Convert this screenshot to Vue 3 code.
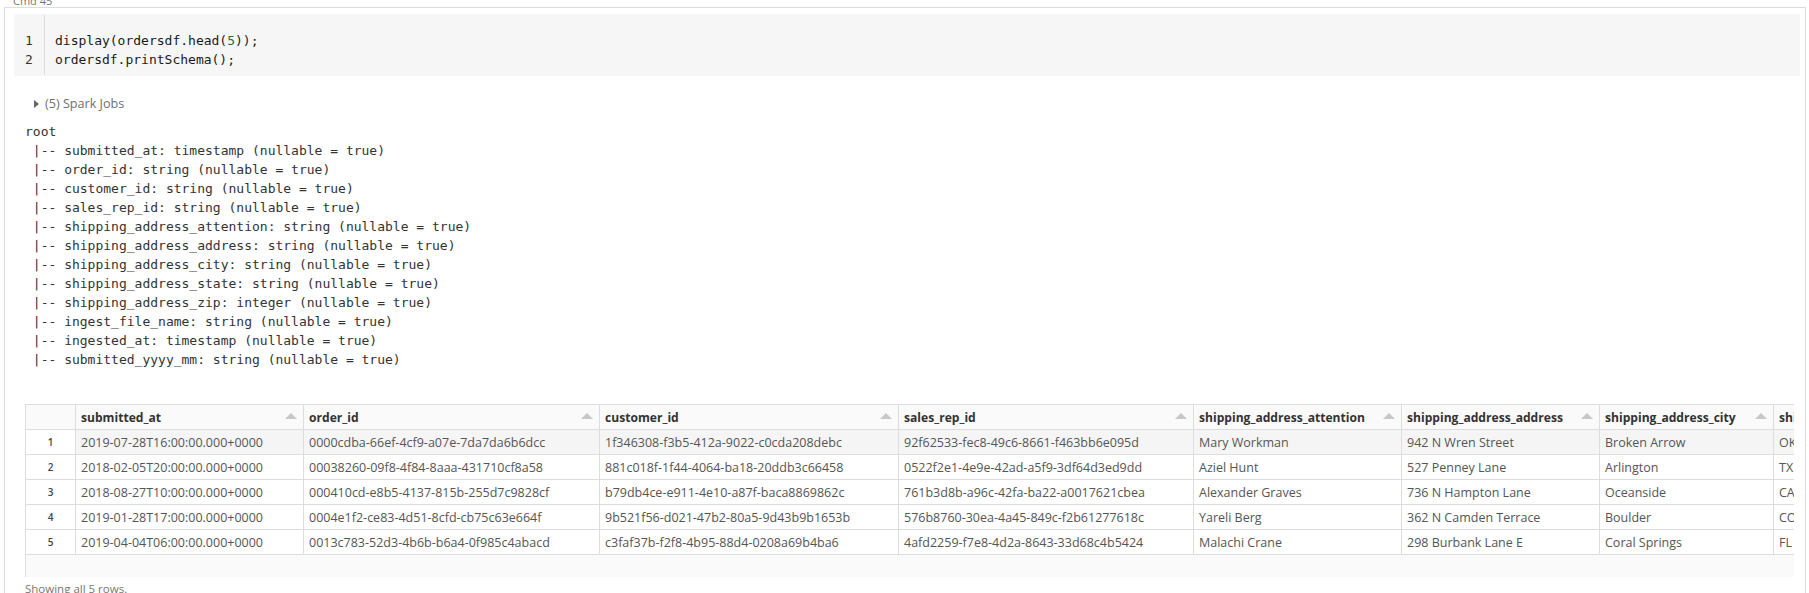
<script setup>
const schema = `root
 |-- submitted_at: timestamp (nullable = true)
 |-- order_id: string (nullable = true)
 |-- customer_id: string (nullable = true)
 |-- sales_rep_id: string (nullable = true)
 |-- shipping_address_attention: string (nullable = true)
 |-- shipping_address_address: string (nullable = true)
 |-- shipping_address_city: string (nullable = true)
 |-- shipping_address_state: string (nullable = true)
 |-- shipping_address_zip: integer (nullable = true)
 |-- ingest_file_name: string (nullable = true)
 |-- ingested_at: timestamp (nullable = true)
 |-- submitted_yyyy_mm: string (nullable = true)`
const cols = [
  { name: 'submitted_at', w: 228 },
  { name: 'order_id', w: 296 },
  { name: 'customer_id', w: 299 },
  { name: 'sales_rep_id', w: 295 },
  { name: 'shipping_address_attention', w: 208 },
  { name: 'shipping_address_address', w: 198 },
  { name: 'shipping_address_city', w: 174 },
  { name: 'shipping_address_state', w: 191 },
]
const rows = [
  ['2019-07-28T16:00:00.000+0000','0000cdba-66ef-4cf9-a07e-7da7da6b6dcc','1f346308-f3b5-412a-9022-c0cda208debc','92f62533-fec8-49c6-8661-f463bb6e095d','Mary Workman','942 N Wren Street','Broken Arrow','OK'],
  ['2018-02-05T20:00:00.000+0000','00038260-09f8-4f84-8aaa-431710cf8a58','881c018f-1f44-4064-ba18-20ddb3c66458','0522f2e1-4e9e-42ad-a5f9-3df64d3ed9dd','Aziel Hunt','527 Penney Lane','Arlington','TX'],
  ['2018-08-27T10:00:00.000+0000','000410cd-e8b5-4137-815b-255d7c9828cf','b79db4ce-e911-4e10-a87f-baca8869862c','761b3d8b-a96c-42fa-ba22-a0017621cbea','Alexander Graves','736 N Hampton Lane','Oceanside','CA'],
  ['2019-01-28T17:00:00.000+0000','0004e1f2-ce83-4d51-8cfd-cb75c63e664f','9b521f56-d021-47b2-80a5-9d43b9b1653b','576b8760-30ea-4a45-849c-f2b61277618c','Yareli Berg','362 N Camden Terrace','Boulder','CO'],
  ['2019-04-04T06:00:00.000+0000','0013c783-52d3-4b6b-b6a4-0f985c4abacd','c3faf37b-f2f8-4b95-88d4-0208a69b4ba6','4afd2259-f7e8-4d2a-8643-33d68c4b5424','Malachi Crane','298 Burbank Lane E','Coral Springs','FL'],
]
</script>

<template>
  <div class="page">
    <div class="cmd">Cmd 45</div>
    <section class="cell">
      <div class="code">
        <div class="nums"><div>1</div><div>2</div></div>
        <div class="src">
          <div>display(ordersdf.head(<span class="num">5</span>));</div>
          <div>ordersdf.printSchema();</div>
        </div>
      </div>
      <div class="jobs"><span class="caret"></span>(5) Spark Jobs</div>
      <pre class="schema">{{ schema }}</pre>
      <div class="wrap">
        <table class="grid">
          <thead>
            <tr>
              <th class="idx"></th>
              <th v-for="c in cols" :key="c.name" :style="{ width: c.w + 'px' }">
                <div class="th"><span>{{ c.name }}</span><i class="sort"></i></div>
              </th>
            </tr>
          </thead>
          <tbody>
            <tr v-for="(r, i) in rows" :key="i" :class="{ first: i === 0 }">
              <td class="idx">{{ i + 1 }}</td>
              <td v-for="(v, j) in r" :key="j">{{ v }}</td>
            </tr>
          </tbody>
        </table>
        <div class="foot"></div>
      </div>
      <div class="showing">Showing all 5 rows.</div>
    </section>
  </div>
</template>

<style>
html, body { margin: 0; background: #fff; overflow: hidden; }
</style>
<style scoped>
.page { width: 1809px; height: 593px; overflow: hidden; font-family: "Open Sans", sans-serif; }
.cmd { height: 7px; padding-left: 13px; font-size: 11px; line-height: 2px; color: #777; overflow: hidden; }
.cell { margin: 0 3px 0 4px; border: 1px solid #ddd; border-bottom: 0; padding: 6px 5px 0 9px; }
.code { display: flex; background: #f6f6f6; border-radius: 2px; height: 62px; font: 13px/19px "DejaVu Sans Mono", monospace; color: #1a1a1a; }
.nums { width: 31px; box-sizing: border-box; border-right: 1px solid #ddd; margin: 1px 0; padding: 16px 0 0 11px; color: #333; }
.src { padding: 17px 0 0 10px; }
.num { color: #1f6f4a; }
.jobs { margin: 18px 0 0 14px; height: 20px; line-height: 20px; font-size: 12.6px; color: #6f6f6f; display: flex; align-items: center; }
.caret { width: 0; height: 0; border-left: 5px solid #666; border-top: 4px solid transparent; border-bottom: 4px solid transparent; margin: 0 6px; }
.schema { margin: 8px 0 0 11px; font: 13px/19px "DejaVu Sans Mono", monospace; color: #333; }
.wrap { margin: 35px 0 0 11px; width: 1769px; overflow: hidden; background: #fafafa; border-left: 1px solid #ddd; box-sizing: border-box; }
.grid { border-collapse: collapse; table-layout: fixed; width: 1889px; margin-left: -1px; font-size: 12.5px; color: #555; background: #fff; }
.grid th, .grid td { border: 1px solid #ddd; height: 25px; box-sizing: border-box; padding: 0 5px; white-space: nowrap; overflow: hidden; text-align: left; }
.grid th { background: #fafafa; color: #333; font-weight: 700; font-size: 12.1px; }
.grid .idx { width: 50px; text-align: center; font-size: 10px; font-weight: 600; color: #444; padding: 0; }
.first td { background: #f5f5f5; }
.first td.idx { background: #fff; }
.th { display: flex; justify-content: space-between; align-items: center; }
.sort { width: 0; height: 0; border-left: 6px solid transparent; border-right: 6px solid transparent; border-bottom: 6px solid #c8c8c8; margin: 0 1px 3px 0; }
.foot { height: 22px; }
.showing { margin: 4px 0 0 11px; font-size: 11.5px; line-height: 16px; color: #777; }
</style>
